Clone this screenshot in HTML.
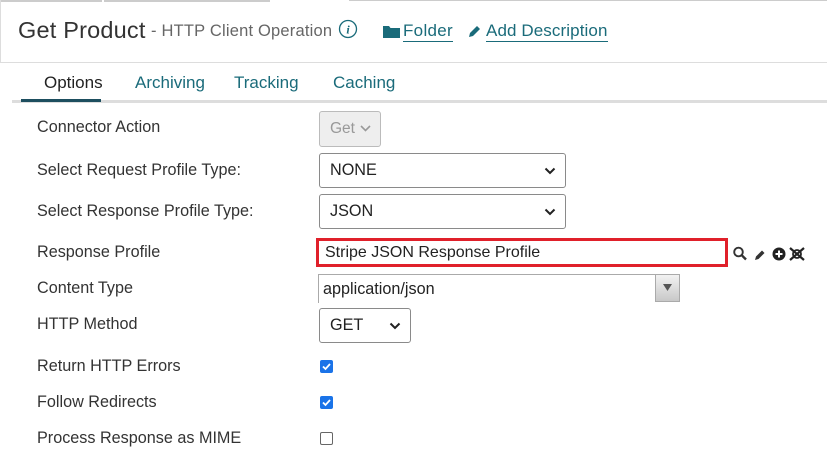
<!DOCTYPE html>
<html><head><meta charset="utf-8"><style>
*{box-sizing:border-box;margin:0;padding:0}
body{width:827px;height:469px;background:#fff;font-family:"Liberation Sans",sans-serif;color:#333;position:relative;overflow:hidden}
.a{position:absolute;white-space:nowrap}
.lbl{left:37px;font-size:16.2px;color:#333}
.sel{position:absolute;border:1px solid #8a8a8a;border-radius:3px;background:#fff;font-size:16.2px;padding-left:10px;display:flex;align-items:center;color:#222}
.chev{position:absolute;right:9px;top:50%;margin-top:-4px}
.cb{position:absolute;left:320px;width:13px;height:13px;border-radius:2px;background:#1a73e8}
.cb svg{position:absolute;left:1px;top:1px}
</style></head><body>
<div class="a" style="left:0;top:0;width:46px;height:2px;background:#ccc"></div>
<div class="a" style="left:46px;top:0;width:56px;height:2px;background:#ccc"></div>
<div class="a" style="left:104px;top:0;width:166px;height:2px;background:#ccc"></div>
<div class="a" style="left:349px;top:0;width:478px;height:1px;background:#ccc"></div>
<div class="a" style="left:0;top:0;width:1px;height:62px;background:#ddd"></div>

<div class="a" style="left:18px;top:17px;font-size:23.5px;color:#333;letter-spacing:0.2px">Get Product</div>
<div class="a" style="left:151px;top:22px;font-size:16.5px;color:#666;letter-spacing:0.2px">- HTTP Client Operation</div>
<svg class="a" style="left:338px;top:19px" width="20" height="20" viewBox="0 0 20 20"><circle cx="10" cy="10" r="8.5" fill="none" stroke="#1a6b7a" stroke-width="1.3"/><text x="10" y="14.5" font-family="Liberation Serif" font-style="italic" font-weight="bold" font-size="12" fill="#1a6b7a" text-anchor="middle">i</text></svg>
<svg class="a" style="left:383px;top:25px" width="17" height="13" viewBox="0 0 17 13"><path d="M0 1h6l1.5 2H17v10H0z" fill="#1a6b7a"/></svg>
<div class="a" style="left:403px;top:21px;font-size:17px;color:#1a6b7a;border-bottom:1.5px solid #1a6b7a;line-height:20px;letter-spacing:0.3px">Folder</div>
<svg class="a" style="left:467px;top:24px" width="15" height="15" viewBox="0 0 15 15"><path d="M2 13l1-4 7-7 3 3-7 7z" fill="#1a6b7a"/></svg>
<div class="a" style="left:486px;top:21px;font-size:17px;color:#1a6b7a;border-bottom:1.5px solid #1a6b7a;line-height:20px;letter-spacing:0.1px">Add Description</div>

<div class="a" style="left:0;top:62px;width:827px;height:1px;background:#ddd"></div>

<div class="a" style="left:44px;top:73px;font-size:17px;color:#222">Options</div>
<div class="a" style="left:135px;top:73px;font-size:17px;color:#1a6b7a">Archiving</div>
<div class="a" style="left:234px;top:73px;font-size:17px;color:#1a6b7a">Tracking</div>
<div class="a" style="left:333px;top:73px;font-size:17px;color:#1a6b7a">Caching</div>
<div class="a" style="left:12px;top:100px;width:815px;height:3px;background:#ddd"></div>
<div class="a" style="left:21px;top:99px;width:80px;height:3px;background:#1d4e5f"></div>

<div class="a lbl" style="top:118px">Connector Action</div>
<div class="a lbl" style="top:161px">Select Request Profile Type:</div>
<div class="a lbl" style="top:202px">Select Response Profile Type:</div>
<div class="a lbl" style="top:243px">Response Profile</div>
<div class="a lbl" style="top:279px">Content Type</div>
<div class="a lbl" style="top:315px">HTTP Method</div>
<div class="a lbl" style="top:357px">Return HTTP Errors</div>
<div class="a lbl" style="top:393px">Follow Redirects</div>
<div class="a lbl" style="top:429px">Process Response as MIME</div>

<div class="sel" style="left:319px;top:111px;width:62px;height:36px;background:#eee;border-color:#bbb;color:#999;font-size:15.5px">Get<svg class="chev" width="11" height="7" viewBox="0 0 11 7"><path d="M1 1l4.5 4.5L10 1" fill="none" stroke="#999" stroke-width="1.6"/></svg></div>
<div class="sel" style="left:319px;top:153px;width:247px;height:35px">NONE<svg class="chev" width="12" height="8" viewBox="0 0 12 8"><path d="M1.5 1.5l4.5 4.5 4.5-4.5" fill="none" stroke="#222" stroke-width="2"/></svg></div>
<div class="sel" style="left:319px;top:194px;width:247px;height:35px">JSON<svg class="chev" width="12" height="8" viewBox="0 0 12 8"><path d="M1.5 1.5l4.5 4.5 4.5-4.5" fill="none" stroke="#222" stroke-width="2"/></svg></div>

<div class="a" style="left:316px;top:238px;width:412px;height:29px;border:3px solid #e0202a;background:#fff"></div>
<div class="a" style="left:325px;top:244px;font-size:16px;color:#222">Stripe JSON Response Profile</div>
<svg class="a" style="left:733px;top:246px" width="80" height="16" viewBox="0 0 80 16">
<circle cx="5.5" cy="6" r="4.3" fill="none" stroke="#333" stroke-width="1.9"/><path d="M8.7 9.2l4.3 4.3" stroke="#333" stroke-width="2.4"/>
<path d="M22 14l1-3.5 6-6 2.5 2.5-6 6z" fill="#333"/>
<circle cx="46" cy="8" r="6.5" fill="#222"/><path d="M46 4.5v7M42.5 8h7" stroke="#fff" stroke-width="2"/>
<path d="M57 2l14 12M71 2L57 14" stroke="#222" stroke-width="2.2"/><circle cx="64" cy="8" r="4" fill="none" stroke="#222" stroke-width="1.8"/>
</svg>

<div class="a" style="left:318px;top:274px;width:362px;height:29px;border:1px solid #aaa;border-bottom:none;border-right:none"></div>
<div class="a" style="left:323px;top:280px;font-size:16.2px;color:#222">application/json</div>
<div class="a" style="left:655px;top:274px;width:25px;height:28px;background:linear-gradient(#f2f2f2,#c8c8c8);border:1px solid #aaa"></div>
<svg class="a" style="left:663px;top:284px" width="9" height="7" viewBox="0 0 9 7"><path d="M0 0h9L4.5 7z" fill="#555"/></svg>

<div class="sel" style="left:319px;top:308px;width:92px;height:35px">GET<svg class="chev" width="12" height="8" viewBox="0 0 12 8"><path d="M1.5 1.5l4.5 4.5 4.5-4.5" fill="none" stroke="#222" stroke-width="2"/></svg></div>

<div class="cb" style="top:360px"><svg width="11" height="11" viewBox="0 0 11 11"><path d="M2 5.5l2.5 2.5L9 3" fill="none" stroke="#fff" stroke-width="1.8"/></svg></div>
<div class="cb" style="top:396px"><svg width="11" height="11" viewBox="0 0 11 11"><path d="M2 5.5l2.5 2.5L9 3" fill="none" stroke="#fff" stroke-width="1.8"/></svg></div>
<div class="cb" style="top:432px;background:#fff;border:1px solid #666"></div>
</body></html>
